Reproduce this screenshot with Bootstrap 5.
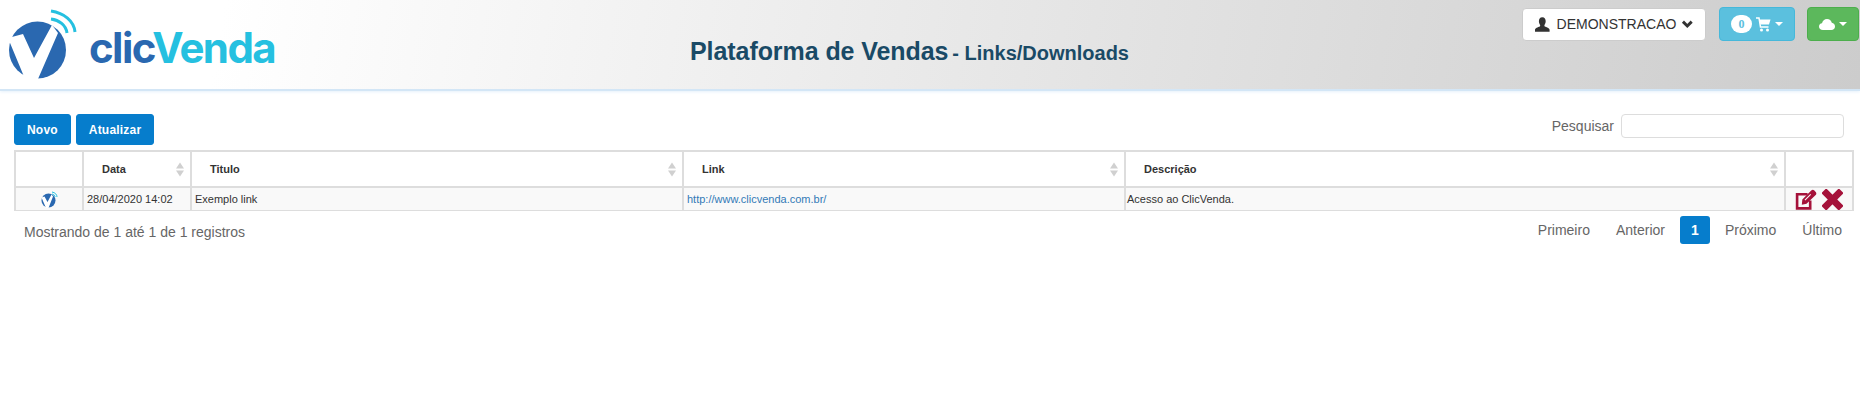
<!DOCTYPE html>
<html lang="pt-BR"><head><meta charset="utf-8"><title>clicVenda</title>
<link href="https://cdn.jsdelivr.net/npm/bootstrap@5.3.0/dist/css/bootstrap.min.css" rel="stylesheet">
<style>
body{font-family:"Liberation Sans",Arial,sans-serif;font-size:14px;color:#333;background:#fff;overflow:hidden}
.top-bar{height:91px;background:linear-gradient(100deg,#fff 12%,#ccc 100%);border-bottom:2px solid #d3e6f6;box-shadow:0 1px 3px #e6f1fb}
.logo-box{width:690px;padding-left:9px;gap:2px;height:89px}
.logo-word{font-family:Inter,"Liberation Sans",sans-serif;font-weight:700;font-size:42px;letter-spacing:-1.6px;line-height:1;margin-top:27px}
.logo-a{color:#2a68b0}.logo-b{color:#25c0e0}
.plat-title{font-weight:700;font-size:25px;color:#1a4a66;margin:0;padding-top:35px;letter-spacing:-.07px;line-height:32px}
.plat-title small{font-size:20px;font-weight:700;letter-spacing:0;margin-left:-3px}
.top-actions{padding:8px 1px 0 0;gap:12px}
.btn-user{background:#fff;border:1px solid #ccc;border-radius:4px;height:33px;width:184px;color:#333;font-size:14px;padding:0 11px 0 12px;gap:7px;margin-right:1px}
.btn-cart,.btn-cloud{height:34px;border-radius:4px;color:#fff;padding:0;margin-top:-1px;gap:4px}
.btn-cart{background:#5bc0de;border:1px solid #46b8da;width:76px}
.btn-cloud{background:#5cb85c;border:1px solid #4cae4c;width:52px}
.btn-cart:hover,.btn-cloud:hover{color:#fff}
.btn-cart.dropdown-toggle::after,.btn-cloud.dropdown-toggle::after{margin-left:0;border-top-width:.3em;border-left-width:.3em;border-right-width:.3em}
.cart-num{background:#fff;color:#5bc0de;border-radius:10px;width:21px;height:18px;font-size:12px;font-weight:700;line-height:18px;text-align:center;font-family:"Liberation Serif",serif}
.main-area{padding:23px 6px 0 14px}
.act-btn{background:#067dcc;color:#fff;border:1px solid #067dcc;font-weight:700;font-size:12px;letter-spacing:.2px;height:31px;padding:0 12px;border-radius:3px}
.act-btn:hover{background:#067dcc;color:#fff}
.act-gap{gap:5px}
.search-lbl{color:#666;font-size:14px}
.search-in{width:223px;height:24px;border:1px solid #ddd;border-radius:4px;margin:0 10px 0 7px;outline:0}
.data-grid{width:1840px;table-layout:fixed;border-collapse:separate;border-spacing:0;border-top:2px solid #ddd;border-left:2px solid #ddd;margin-top:5px}
.data-grid th,.data-grid td{border-right:2px solid #ddd;font-size:11px;vertical-align:middle}
.data-grid th{height:36px;border-bottom:2px solid #ddd;padding:0 6px 0 18px;font-weight:700;color:#333}
.data-grid td{height:23px;border-bottom:1px solid #ddd;padding:0 3px;background:#f9f9f9;color:#333}
.data-grid td.desc-cell{padding-left:1px}
.data-grid a{color:#337ab7;text-decoration:none}
.foot-row{padding:0 0 0 10px;margin-right:-1px}
.count-txt{color:#666;font-size:14px;margin-top:11px}
.pager-row{margin-top:5px}
.pg-link{color:#666;font-size:14px;padding:0 13px;line-height:28px}
.pg-on{background:#067dcc;color:#fff;font-weight:700;border-radius:3px;width:30px;height:28px;text-align:center;padding:0;margin:0 2px}
.row-tools{gap:5px}
</style></head><body>
<header class="top-bar d-flex">
  <div class="logo-box d-flex align-items-start flex-shrink-0">
    <svg width="78" height="89" viewBox="0 0 78 89" class="flex-shrink-0">
      <circle cx="28.5" cy="50" r="28.5" fill="#2a68b0"/>
      <path d="M-1 38 14 34 25 58 43 25 49 33 29 79 16 79Z" fill="#fff"/>
      <path d="M42 11C55 13 65 21 66 32" fill="none" stroke="#25c0e0" stroke-width="3"/>
      <path d="M42 19C50 20 57 25 58 33" fill="none" stroke="#25c0e0" stroke-width="3"/>
    </svg>
    <div class="logo-word"><span class="logo-a">clic</span><span class="logo-b">Venda</span></div>
  </div>
  <h1 class="plat-title">Plataforma de Vendas <small>- Links/Downloads</small></h1>
  <div class="top-actions d-flex align-items-start ms-auto">
    <button class="btn-user d-flex align-items-center" type="button">
      <svg width="15" height="15" viewBox="0 0 15 15"><path d="M7.5 0C10 0 11 2 11 4.200 11 6 10.200 7.500 9.600 8.300L10 9.600C12 10.400 15 11.300 15 13V15H0V13C0 11.300 3 10.400 5 9.600L5.400 8.300C4.800 7.500 4 6 4 4.200 4 2 5 0 7.500 0Z" fill="#333"/></svg>
      <span>DEMONSTRACAO</span>
      <svg width="13" height="10" viewBox="0 0 13 10" style="margin-left:-2px"><path d="M2 1.500 6.500 6 11 1.500" fill="none" stroke="#333" stroke-width="3"/></svg>
    </button>
    <button class="btn btn-cart dropdown-toggle d-flex align-items-center justify-content-center" type="button">
      <span class="cart-num">0</span>
      <svg width="15" height="15" viewBox="0 0 15 15"><path d="M0 1H3L4.500 10H12.500" fill="none" stroke="#fff" stroke-width="1.500"/><path d="M3.500 2.500H14.500L13 7.500H4.300Z" fill="#fff"/><circle cx="5.500" cy="13" r="1.500" fill="#fff"/><circle cx="11.500" cy="13" r="1.500" fill="#fff"/></svg>
    </button>
    <button class="btn btn-cloud dropdown-toggle d-flex align-items-center justify-content-center" type="button">
      <svg width="16" height="11" viewBox="0 0 16 11"><path d="M4 11C1.500 11 0 9.500 0 7.500 0 5.800 1.200 4.500 3 4.300 3.500 1.800 5.500 0 8 0 10.500 0 12.300 1.600 12.800 3.800 14.700 4 16 5.500 16 7.400 16 9.500 14.500 11 12.300 11Z" fill="#fff"/></svg>
    </button>
  </div>
</header>
<main class="main-area">
  <div class="d-flex align-items-start">
    <div class="d-flex act-gap">
      <button class="btn act-btn" type="button">Novo</button>
      <button class="btn act-btn" type="button">Atualizar</button>
    </div>
    <label class="ms-auto d-flex align-items-center search-lbl">Pesquisar<input class="search-in" type="text" aria-label="Pesquisar"></label>
  </div>
  <table class="data-grid">
    <colgroup><col style="width:68px"><col style="width:108px"><col style="width:492px"><col style="width:442px"><col style="width:660px"><col style="width:68px"></colgroup>
    <thead><tr>
      <th></th>
      <th><div class="d-flex justify-content-between align-items-center">Data<svg width="8" height="15" viewBox="0 0 9 16"><path d="M4.500 0 9 7H0ZM0 9H9L4.500 16Z" fill="#d0d0d0"/></svg></div></th>
      <th><div class="d-flex justify-content-between align-items-center">Titulo<svg width="8" height="15" viewBox="0 0 9 16"><path d="M4.500 0 9 7H0ZM0 9H9L4.500 16Z" fill="#d0d0d0"/></svg></div></th>
      <th><div class="d-flex justify-content-between align-items-center">Link<svg width="8" height="15" viewBox="0 0 9 16"><path d="M4.500 0 9 7H0ZM0 9H9L4.500 16Z" fill="#d0d0d0"/></svg></div></th>
      <th><div class="d-flex justify-content-between align-items-center">Descrição<svg width="8" height="15" viewBox="0 0 9 16"><path d="M4.500 0 9 7H0ZM0 9H9L4.500 16Z" fill="#d0d0d0"/></svg></div></th>
      <th></th>
    </tr></thead>
    <tbody><tr>
      <td class="text-center"><svg width="17" height="17" viewBox="0 0 17 17" class="d-block mx-auto"><circle cx="7.500" cy="9.500" r="7" fill="#2a68b0"/><path d="M.5 6.500 3.500 5.500 6.500 11 10.500 3.500 12 5.500 7.500 17H5Z" fill="#fff"/><path d="M11 1C14 1.500 16 3.500 16 6" fill="none" stroke="#25c0e0"/><path d="M11 3C13 3.500 14 4.500 14 6" fill="none" stroke="#25c0e0"/></svg></td>
      <td>28/04/2020 14:02</td>
      <td>Exemplo link</td>
      <td><a href="#">http://www.clicvenda.com.br/</a></td>
      <td class="desc-cell">Acesso ao ClicVenda.</td>
      <td><div class="row-tools d-flex justify-content-center">
        <svg width="22" height="21" viewBox="0 0 21 20"><path d="M12 5H2V18.500H14.500V11" fill="none" stroke="#a5123a" stroke-width="2.500"/><path d="M7 10 15.500 1.500C16.500.5 17.500.5 18.500 1.500L20 3C20.500 4 20.500 4.500 20 5.500L11 14 6.500 15Z" fill="#a5123a"/><path d="M9.500 10.500 15 5" stroke="#f9f9f9" stroke-width="1"/></svg>
        <svg width="21" height="21" viewBox="0 0 20 20"><path d="M4 4 16 16M16 4 4 16" stroke="#a5123a" stroke-width="6.500" stroke-linecap="square"/></svg>
      </div></td>
    </tr></tbody>
  </table>
  <div class="foot-row d-flex justify-content-between align-items-start">
    <div class="count-txt">Mostrando de 1 até 1 de 1 registros</div>
    <div class="pager-row d-flex align-items-center">
      <span class="pg-link">Primeiro</span><span class="pg-link">Anterior</span><span class="pg-link pg-on">1</span><span class="pg-link">Próximo</span><span class="pg-link">Último</span>
    </div>
  </div>
</main>
</body></html>
